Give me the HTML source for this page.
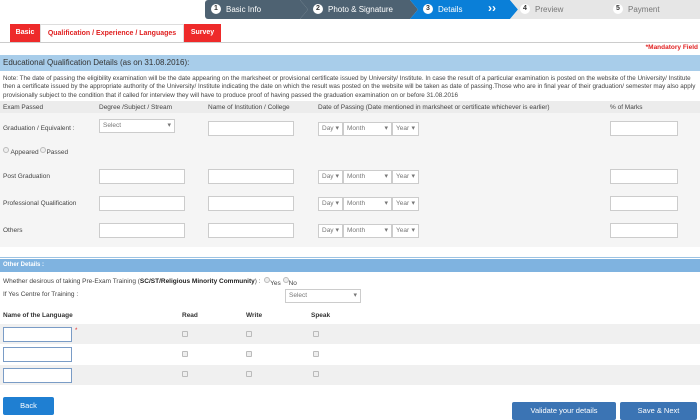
<!DOCTYPE html>
<html><head><style>
*{margin:0;padding:0;box-sizing:border-box}
body{width:700px;height:420px;position:relative;background:#fff;font-family:"Liberation Sans",sans-serif;color:#333;overflow:hidden}
.a{position:absolute;white-space:nowrap}
.step{position:absolute;top:0;height:19px;font-size:8px;line-height:19px;color:#fff;clip-path:polygon(0 0,calc(100% - 8px) 0,100% 50%,calc(100% - 8px) 100%,0 100%,8px 50%)}
.num{display:inline-block;width:10px;height:10px;border-radius:50%;background:#fff;color:#333;font-size:7px;line-height:10px;text-align:center;font-weight:bold;margin-right:5px;vertical-align:middle;position:relative;top:-1px}
.inp{position:absolute;border:1px solid #ccc;background:#fff;height:15px}
.sel{position:absolute;border:1px solid #ccc;background:#fff;height:14px;font-size:6.5px;line-height:12px;color:#777;padding-left:3px}
.sel:after{content:"▾";position:absolute;right:3px;top:0;font-size:7px}
.lbl{position:absolute;font-size:6.5px;color:#444;white-space:nowrap}
.cb{position:absolute;width:6px;height:6px;border:1px solid #bbb;border-radius:1px;background:#eee}
.rad{display:inline-block;width:6px;height:6px;border:1px solid #bbb;border-radius:50%;background:#eee;vertical-align:top}
.btn{position:absolute;color:#fff;font-size:7.5px;text-align:center;border-radius:2px}
</style></head><body>
<div class="step" style="left:205px;width:103px;background:#4e6272;padding-left:6px;border-radius:3px 0 0 3px;clip-path:polygon(0 0,calc(100% - 8px) 0,100% 50%,calc(100% - 8px) 100%,0 100%)"><span class="num">1</span>Basic Info</div>
<div class="step" style="left:300px;width:118px;background:#4e6272;padding-left:13px"><span class="num">2</span>Photo &amp; Signature</div>
<div class="step" style="left:410px;width:108px;background:#0a7fd8;padding-left:13px"><span class="num">3</span>Details<span style="position:absolute;left:78px;top:-1px;font-weight:bold;font-size:12px">››</span></div>
<div class="step" style="left:510px;width:100px;background:#e6e6e6;color:#777;padding-left:10px"><span class="num" style="background:#fff">4</span>Preview</div>
<div class="step" style="left:600px;width:108px;background:#e6e6e6;color:#777;padding-left:13px"><span class="num">5</span>Payment</div>

<div class="a" style="left:10px;top:24px;width:30px;height:18px;background:#ee2a2a;color:#fff;font-size:7px;font-weight:bold;text-align:center;line-height:18px">Basic</div>
<div class="a" style="left:40px;top:24px;width:144px;height:18px;background:#fff;border:1px solid #ddd;border-bottom:none;color:#e02020;font-size:7px;font-weight:bold;text-align:center;line-height:17px">Qualification / Experience / Languages</div>
<div class="a" style="left:184px;top:24px;width:37px;height:18px;background:#ee2a2a;color:#fff;font-size:7px;font-weight:bold;text-align:center;line-height:18px">Survey</div>
<div class="a" style="left:0;top:42px;width:700px;height:1px;background:#ccc"></div>
<div class="a" style="right:2px;top:44px;color:#e02020;font-size:6.5px;font-weight:bold">*Mandatory Field</div>

<div class="a" style="left:0;top:55px;width:700px;height:16px;background:#a8cdea;font-size:8px;line-height:16px;padding-left:3px;color:#333">Educational Qualification Details (as on 31.08.2016):</div>
<div class="a" style="left:3px;top:75px;width:694px;font-size:6.3px;line-height:8.3px;white-space:normal;color:#444">Note: The date of passing the eligibility examination will be the date appearing on the marksheet or provisional certificate issued by University/ Institute. In case the result of a particular examination is posted on the website of the University/ Institute then a certificate issued by the appropriate authority of the University/ Institute indicating the date on which the result was posted on the website will be taken as date of passing.Those who are in final year of their graduation/ semester may also apply provisionally subject to the condition that if called for interview they will have to produce proof of having passed the graduation examination on or before 31.08.2016</div>

<div class="a" style="left:0;top:101px;width:700px;height:146px;background:#f5f5f5"></div>
<div class="a" style="left:0;top:101px;width:700px;height:12px;background:#ececec"></div>
<div class="lbl" style="left:3px;top:104px">Exam Passed</div>
<div class="lbl" style="left:99px;top:104px">Degree /Subject / Stream</div>
<div class="lbl" style="left:208px;top:104px">Name of Institution / College</div>
<div class="lbl" style="left:318px;top:104px">Date of Passing (Date mentioned in marksheet or certificate whichever is earlier)</div>
<div class="lbl" style="left:610px;top:104px">% of Marks</div>

<div class="lbl" style="left:3px;top:125px">Graduation / Equivalent :</div>
<div class="sel" style="left:99px;top:119px;width:76px">Select</div>
<div class="inp" style="left:208px;top:121px;width:86px"></div>
<div class="inp" style="left:610px;top:121px;width:68px"></div>
<div class="lbl" style="left:3px;top:147px"><span class="rad"></span> <span style="position:relative;top:2px">Appeared</span> <span class="rad"></span><span style="position:relative;top:2px">Passed</span></div>

<div class="lbl" style="left:3px;top:173px">Post Graduation</div>
<div class="inp" style="left:99px;top:169px;width:86px"></div>
<div class="inp" style="left:208px;top:169px;width:86px"></div>
<div class="inp" style="left:610px;top:169px;width:68px"></div>
<div class="lbl" style="left:3px;top:200px">Professional Qualification</div>
<div class="inp" style="left:99px;top:196px;width:86px"></div>
<div class="inp" style="left:208px;top:196px;width:86px"></div>
<div class="inp" style="left:610px;top:196px;width:68px"></div>
<div class="lbl" style="left:3px;top:227px">Others</div>
<div class="inp" style="left:99px;top:223px;width:86px"></div>
<div class="inp" style="left:208px;top:223px;width:86px"></div>
<div class="inp" style="left:610px;top:223px;width:68px"></div>

<div class="sel" style="left:318px;top:122px;width:25px">Day</div><div class="sel" style="left:343px;top:122px;width:49px">Month</div><div class="sel" style="left:392px;top:122px;width:27px">Year</div>
<div class="sel" style="left:318px;top:170px;width:25px">Day</div><div class="sel" style="left:343px;top:170px;width:49px">Month</div><div class="sel" style="left:392px;top:170px;width:27px">Year</div>
<div class="sel" style="left:318px;top:197px;width:25px">Day</div><div class="sel" style="left:343px;top:197px;width:49px">Month</div><div class="sel" style="left:392px;top:197px;width:27px">Year</div>
<div class="sel" style="left:318px;top:224px;width:25px">Day</div><div class="sel" style="left:343px;top:224px;width:49px">Month</div><div class="sel" style="left:392px;top:224px;width:27px">Year</div>

<div class="a" style="left:0;top:257px;width:700px;height:1px;background:#9cc3e3"></div>
<div class="a" style="left:0;top:259px;width:700px;height:13px;background:#7fb3e0;color:#fff;font-size:6px;font-weight:bold;line-height:13px;padding-left:3px">Other Details :</div>
<div class="lbl" style="left:3px;top:278px">Whether desirous of taking Pre-Exam Training (<b style="color:#222">SC/ST/Religious Minority Community</b>) : &nbsp;<span class="rad" style="position:relative;top:-1px"></span><span style="position:relative;top:2px">Yes</span> <span class="rad" style="position:relative;top:-1px"></span><span style="position:relative;top:2px">No</span></div>
<div class="lbl" style="left:3px;top:291px">If Yes Centre for Training :</div>
<div class="sel" style="left:285px;top:289px;width:76px">Select</div>

<div class="lbl" style="left:3px;top:312px;font-weight:bold;color:#333">Name of the Language</div>
<div class="lbl" style="left:182px;top:312px;font-weight:bold;color:#333">Read</div>
<div class="lbl" style="left:246px;top:312px;font-weight:bold;color:#333">Write</div>
<div class="lbl" style="left:311px;top:312px;font-weight:bold;color:#333">Speak</div>
<div class="a" style="left:0;top:324px;width:700px;height:20px;background:#f0f0f0"></div>
<div class="a" style="left:0;top:365px;width:700px;height:20px;background:#f0f0f0"></div>
<div class="inp" style="left:3px;top:327px;width:69px;height:15px;border-color:#7a9cc6"></div>
<div class="a" style="left:75px;top:328px;color:#e02020;font-size:6px">*</div>
<div class="inp" style="left:3px;top:347px;width:69px;height:15px;border-color:#7a9cc6"></div>
<div class="inp" style="left:3px;top:368px;width:69px;height:15px;border-color:#7a9cc6"></div>
<div class="cb" style="left:182px;top:331px"></div><div class="cb" style="left:246px;top:331px"></div><div class="cb" style="left:313px;top:331px"></div>
<div class="cb" style="left:182px;top:351px"></div><div class="cb" style="left:246px;top:351px"></div><div class="cb" style="left:313px;top:351px"></div>
<div class="cb" style="left:182px;top:371px"></div><div class="cb" style="left:246px;top:371px"></div><div class="cb" style="left:313px;top:371px"></div>

<div class="btn" style="left:3px;top:397px;width:51px;height:18px;line-height:18px;background:#1f7fd2">Back</div>
<div class="btn" style="left:512px;top:402px;width:104px;height:18px;line-height:18px;background:#3b74b4">Validate your details</div>
<div class="btn" style="left:620px;top:402px;width:77px;height:18px;line-height:18px;background:#3b74b4">Save &amp; Next</div>
</body></html>
